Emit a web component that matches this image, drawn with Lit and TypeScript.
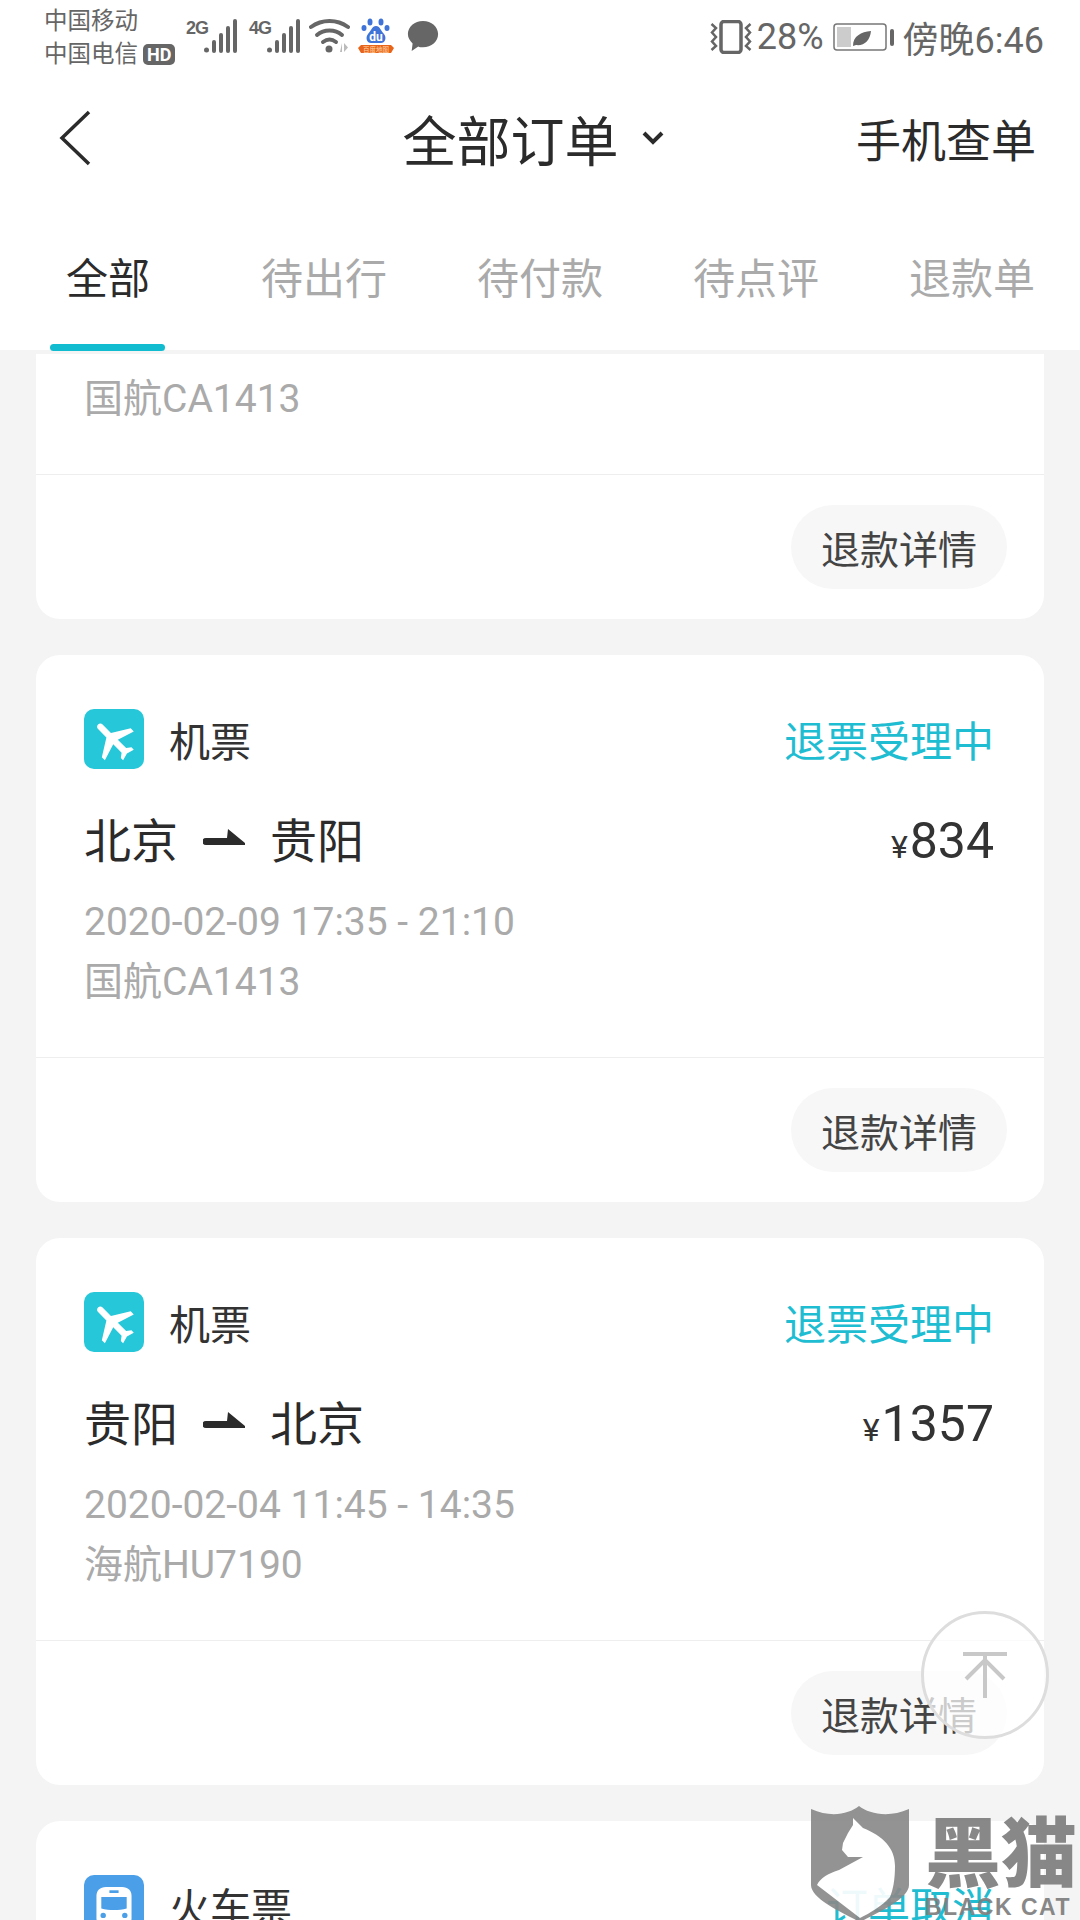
import { LitElement, css, html, svg } from 'lit';
import { customElement, property } from 'lit/decorators.js';

type Order = {
  kind: 'flight' | 'train';
  label: string;
  status: string;
  from?: string;
  to?: string;
  price?: string;
  time?: string;
  flight?: string;
};

const planeIcon = svg`<g transform="translate(4.200 4.200) scale(2.150)"><path fill="#fff" transform="rotate(-45 12 12)" d="M21 16v-2l-8-5V3.500c0-.83-.67-1.500-1.500-1.500S10 2.670 10 3.500V9l-8 5v2l8-2.500V19l-2 1.500V22l3.500-1 3.500 1v-1.500L13 19v-5.500l8 2.500z"/></g>`;
const trainIcon = svg`<g transform="translate(-2.400 -5.500) scale(2.700)">
  <path fill="#fff" d="M9 6.500h6c2.200 0 3.500 1.300 3.500 3.300v8.400c0 .8-.6 1.300-1.300 1.300H6.800c-.7 0-1.300-.5-1.300-1.300V9.800c0-2 1.300-3.300 3.500-3.300z"/>
  <path fill="#4a9fe8" d="M7.300 10.200h9.400v4.200c-3 .8-6.400.8-9.400 0z"/>
  <rect x="10.300" y="7.700" width="3.400" height="1" fill="#4a9fe8"/>
  <circle cx="8" cy="17" r="1" fill="#4a9fe8"/>
  <circle cx="16" cy="17" r="1" fill="#4a9fe8"/>
</g>`;

@customElement('order-card')
export class OrderCard extends LitElement {
  @property({ type: Object }) order!: Order;
  @property({ type: Boolean }) tail = false;

  static styles = css`
    :host {
      display: block;
    }

    .card {
      background: #fff;
      border-radius: 24px;
      padding-top: 53px;
    }

    .card.tail {
      border-radius: 0 0 24px 24px;
      padding-top: 15px;
    }

    .body {
      padding: 0 50px 45px 48px;
    }

    .row {
      align-items: center;
      display: flex;
      justify-content: space-between;
    }

    .kind {
      align-items: center;
      color: #333;
      display: flex;
      font-size: 41px;
      gap: 25px;
      height: 60px;
    }

    .kind svg {
      border-radius: 10px;
      display: block;
      height: 60px;
      width: 60px;
    }

    .status {
      color: #1fbdd2;
      font-size: 42px;
    }

    .route-row {
      height: 60px;
      margin-top: 42px;
    }

    .route {
      align-items: center;
      color: #2b2b2b;
      display: flex;
      font-size: 47px;
      gap: 25px;
      height: 52px;
      margin-bottom: 8px;
    }

    .route svg {
      display: block;
    }

    .price {
      color: #333;
      font-size: 50px;
      line-height: 60px;
    }

    .price small {
      font-size: 32px;
      line-height: 1;
      margin-right: 2px;
    }

    .meta {
      color: #aaa;
      font-size: 39px;
      height: 60px;
      line-height: 60px;
    }

    .time {
      margin-top: 21px;
    }

    .footer {
      border-top: 1px solid #eee;
      display: flex;
      justify-content: flex-end;
      padding: 30px 37px 30px 0;
    }

    .detail {
      align-items: center;
      background: #f7f7f7;
      border-radius: 42px;
      color: #444;
      display: flex;
      font-size: 39px;
      height: 84px;
      justify-content: center;
      width: 216px;
    }
  `;

  render() {
    const o = this.order;
    if (this.tail) {
      return html`
        <div class="card tail">
          <div class="body"><div class="meta">${o.flight}</div></div>
          ${this.footer()}
        </div>
      `;
    }
    return html`
      <div class="card">
        <div class="body">
          <div class="row">
            <div class="kind">
              <svg viewBox="0 0 60 60">
                <rect width="60" height="60" fill=${o.kind === 'flight' ? '#25c7d9' : '#4a9fe8'} />
                ${o.kind === 'flight' ? planeIcon : trainIcon}
              </svg>
              ${o.label}
            </div>
            <div class="status">${o.status}</div>
          </div>
          ${o.from
            ? html`
                <div class="row route-row">
                  <div class="route">
                    ${o.from}
                    <svg width="42" height="18" viewBox="0 0 42 18">
                      <path fill="#2b2b2b" d="M3 10h21l1-9 17 14v2H3a3.500 3.500 0 0 1 0-7z" />
                    </svg>
                    ${o.to}
                  </div>
                  <div class="price"><small>¥</small>${o.price}</div>
                </div>
                <div class="meta time">${o.time}</div>
                <div class="meta">${o.flight}</div>
              `
            : ''}
        </div>
        ${o.from ? this.footer() : ''}
      </div>
    `;
  }

  footer() {
    return html`<div class="footer"><div class="detail">退款详情</div></div>`;
  }
}

const orders: Order[] = [
  { kind: 'flight', label: '机票', status: '退票受理中', from: '北京', to: '贵阳', price: '834', time: '2020-02-09 17:35 - 21:10', flight: '国航CA1413' },
  { kind: 'flight', label: '机票', status: '退票受理中', from: '贵阳', to: '北京', price: '1357', time: '2020-02-04 11:45 - 14:35', flight: '海航HU7190' },
  { kind: 'train', label: '火车票', status: '订单取消' },
];

const tabs = ['全部', '待出行', '待付款', '待点评', '退款单'];

@customElement('app-root')
export class AppRoot extends LitElement {
  static styles = css`
    :host {
      background: #f4f4f4;
      display: block;
      font-family: Roboto, 'Noto Sans CJK SC', sans-serif;
      height: 1920px;
      overflow: hidden;
      position: relative;
      width: 1080px;
    }

    .top {
      background: #fff;
      height: 350px;
    }

    .status-bar {
      align-items: flex-start;
      color: #666;
      display: flex;
      height: 90px;
      justify-content: space-between;
      padding: 0 36px 0 44px;
    }

    .left,
    .right {
      display: flex;
    }

    .right {
      align-items: center;
      font-size: 36px;
      height: 73px;
    }

    .carriers {
      font-size: 23.500px;
      line-height: 33px;
      padding-top: 5px;
      width: 142px;
    }

    .hd {
      background: #666;
      border-radius: 5px;
      color: #fff;
      font-size: 18px;
      font-weight: 700;
      margin-left: 5px;
      padding: 0 4px;
      vertical-align: 1px;
    }

    .signals {
      align-items: flex-start;
      display: flex;
      padding-top: 19px;
    }

    .signals svg,
    .right svg {
      display: block;
    }

    .sig-label {
      display: block;
      font-family: 'Liberation Sans', sans-serif;
      font-size: 18px;
      font-weight: 700;
      letter-spacing: -1px;
      line-height: 18px;
      width: 19px;
    }

    .bars {
      margin-left: -1px;
      margin-right: 11px;
    }

    .pct {
      margin: 0 9px 0 5px;
    }

    .clock {
      margin-left: 8px;
    }

    .title-bar {
      align-items: center;
      color: #2b2b2b;
      display: grid;
      grid-template-columns: 1fr auto 1fr;
      height: 96px;
      padding: 0 44px 0 58px;
    }

    .title {
      align-items: center;
      display: flex;
      font-size: 54px;
      gap: 23px;
      margin-right: 28px;
    }

    .phone {
      font-size: 45px;
      text-align: right;
    }

    .tabs {
      display: grid;
      grid-template-columns: repeat(5, 216px);
      margin-top: 33px;
    }

    .tab {
      color: #aaa;
      font-size: 42px;
      height: 131px;
      line-height: 121px;
      position: relative;
      text-align: center;
    }

    .tab.on {
      color: #2b2b2b;
    }

    .tab.on::after {
      background: #12bcd0;
      border-radius: 4px;
      bottom: -1px;
      content: '';
      height: 7px;
      left: 50px;
      position: absolute;
      width: 115px;
    }

    .list {
      display: flex;
      flex-direction: column;
      gap: 36px;
      padding: 4px 36px 0;
    }

    .to-top {
      align-items: center;
      background: rgba(255, 255, 255, 0.72);
      border: 3px solid #ddd;
      border-radius: 50%;
      box-sizing: border-box;
      display: flex;
      height: 128px;
      justify-content: center;
      left: 921px;
      position: absolute;
      top: 1611px;
      width: 128px;
    }

    .mark {
      align-items: flex-start;
      display: flex;
      gap: 16px;
      left: 811px;
      opacity: 0.92;
      position: absolute;
      top: 1806px;
    }

    .mark svg {
      display: block;
    }

    .mark-text {
      color: #7e7e7e;
      font-weight: 900;
      width: 155px;
    }

    .mark-cn {
      font-family: 'Noto Sans CJK SC', sans-serif;
      font-size: 76px;
      font-weight: 900;
      line-height: 76px;
      margin-top: 4px;
      white-space: nowrap;
    }

    .mark-en {
      font-family: 'Liberation Sans', sans-serif;
      font-size: 23px;
      font-weight: 700;
      letter-spacing: 1.500px;
      line-height: 26px;
      margin-top: 8px;
      white-space: nowrap;
    }
  `;

  render() {
    return html`
      <div class="top">
        ${this.statusBar()}
        <div class="title-bar">
          <svg width="34" height="56" viewBox="0 0 34 56">
            <path d="M31 2 4 28l27 26" fill="none" stroke="#2b2b2b" stroke-width="3.500" />
          </svg>
          <div class="title">
            全部订单
            <svg width="22" height="16" viewBox="0 0 22 16">
              <path d="M2 3l9 9 9-9" fill="none" stroke="#2b2b2b" stroke-width="4" />
            </svg>
          </div>
          <div class="phone">手机查单</div>
        </div>
        <div class="tabs">
          ${tabs.map((t, i) => html`<div class="tab ${i === 0 ? 'on' : ''}">${t}</div>`)}
        </div>
      </div>
      <div class="list">
        <order-card tail .order=${{ flight: '国航CA1413' } as Order}></order-card>
        ${orders.map((o) => html`<order-card .order=${o}></order-card>`)}
      </div>
      <div class="to-top">
        <svg width="48" height="48" viewBox="0 0 48 48">
          <path d="M2 3h44M24 3v44M5 28 24 9l19 19" fill="none" stroke="#c8c8c8" stroke-width="4" />
        </svg>
      </div>
      ${this.watermark()}
    `;
  }

  statusBar() {
    const bars = svg`
      <g fill="#666">
        <circle cx="2.500" cy="31" r="2.500" />
        <rect x="8" y="21" width="4" height="13" rx="2" />
        <rect x="15" y="14" width="4" height="20" rx="2" />
        <rect x="22" y="7" width="4" height="27" rx="2" />
        <rect x="29" y="0" width="4" height="34" rx="2" />
      </g>`;
    return html`
      <div class="status-bar">
        <div class="left">
          <div class="carriers">中国移动<br />中国电信<span class="hd">HD</span></div>
          <div class="signals">
            <span class="sig-label">2G</span>
            <svg class="bars" width="34" height="34" viewBox="0 0 34 34">${bars}</svg>
            <span class="sig-label">4G</span>
            <svg class="bars" width="34" height="34" viewBox="0 0 34 34">${bars}</svg>
            <svg width="41" height="34" viewBox="0 0 41 34" style="margin-left:-3px">
              <g fill="none" stroke="#666" stroke-width="4" stroke-linecap="round">
                <path d="M2 8c11-8 26-8 37 0" />
                <path d="M8 16c7-6 18-6 25 0" />
                <path d="M14 23c4-3 9-3 13 0" />
              </g>
              <circle cx="20" cy="30" r="3.500" fill="#666" />
              <path d="M33 24v9h-2zM35 24l4 4.500-4 4.500z" fill="#bbb" />
            </svg>
            <svg width="36" height="36" viewBox="0 0 36 36" style="margin:-1px 0 0 8px">
              <g fill="#3f73d8">
                <ellipse cx="12" cy="4" rx="2.500" ry="3.500" />
                <ellipse cx="23" cy="4" rx="2.500" ry="3.500" />
                <ellipse cx="6" cy="10" rx="2.500" ry="3" />
                <ellipse cx="29" cy="10" rx="2.500" ry="3" />
                <path d="M18 8c4 0 5 5 8 8 3 4 1 9-3 9H13c-4 0-6-5-3-9 3-3 4-8 8-8z" />
              </g>
              <text x="18" y="23" fill="#fff" font-size="12" font-weight="700" text-anchor="middle">du</text>
              <path d="M3 27h30l3 3-3 5H3l-3-5z" fill="#e8641b" />
              <text x="18" y="34" fill="#ffd9a8" font-size="6.500" text-anchor="middle">百度地图</text>
            </svg>
            <svg width="34" height="34" viewBox="0 0 36 36" style="margin-left:12px">
              <path fill="#666" d="M18 2c9 0 16 6 16 14s-7 14-16 14c-2 0-4 0-5-1l-7 5 1-8c-3-3-5-6-5-10C2 8 9 2 18 2z" />
            </svg>
          </div>
        </div>
        <div class="right">
          <svg width="42" height="34" viewBox="0 0 42 34">
            <rect x="11" y="1.500" width="20" height="31" rx="3" fill="none" stroke="#666" stroke-width="3.500" />
            <path d="M1.500 4 6 8 2 12.500 6 17l-4 4.500 4 4.500-4.500 4M40.500 4 36 8l4 4.500-4 4.500 4 4.500-4 4.500 4.500 4" fill="none" stroke="#666" stroke-width="2.500" />
          </svg>
          <span class="pct">28%</span>
          <svg width="62" height="28" viewBox="0 0 62 28">
            <rect x="1" y="1" width="52" height="26" rx="3" fill="none" stroke="#777" stroke-width="1.500" />
            <rect x="4" y="4" width="14" height="20" fill="#ccc" />
            <path d="M20 23c0-10 8-14 18-15-1 10-7 15-15 14z" fill="#666" />
            <rect x="57" y="6" width="4" height="17" rx="2" fill="#666" />
          </svg>
          <span class="clock">傍晚6:46</span>
        </div>
      </div>
    `;
  }

  watermark() {
    return html`
      <div class="mark">
        <svg width="98" height="116" viewBox="0 0 98 116">
          <path fill="#8a8a8a" d="M0 3c20 9 38 5 48-3 10 8 30 12 50 3v76c0 14-32 28-49 37C32 107 0 93 0 79z" />
          <path fill="#fff" d="M42 12 52 22C72 30 84 42 84 60c0 14-2 24-5 31-8 9-20 16-30 21L6 79c3-7 12-12 22-15l24-13H37l-6-7 1-7 5-10 5-8z" />
        </svg>
        <div class="mark-text">
          <div class="mark-cn">黑猫</div>
          <div class="mark-en">BLACK CAT</div>
        </div>
      </div>
    `;
  }
}
